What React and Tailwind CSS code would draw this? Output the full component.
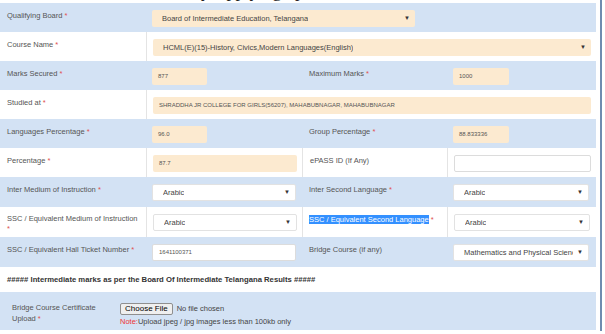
import React from 'react';

const font = { fontFamily: '"Liberation Sans", Arial, sans-serif' };

const Label = ({ children, req }) => (
  <div className="px-[7px] pt-[8px] text-[7.5px] leading-[10px] text-[#555]">
    {children}
    {req && <span className="text-[#e05050]"> *</span>}
  </div>
);

const Field = ({ value, w, white }) => (
  <div
    className={`mt-[7px] ml-[6px] h-[17px] rounded-[2px] px-[6px] flex items-center text-[6px] text-[#555] ${w} ${
      white ? 'bg-white border border-[#dcdcdc]' : 'bg-[#fcead0]'
    }`}
  >
    {value}
  </div>
);

const Select = ({ value, w, white }) => (
  <div
    className={`mt-[7px] ml-[6px] h-[17px] rounded-[2px] pl-[10px] pr-[5px] flex items-center justify-between text-[7.5px] text-[#444] ${w} ${
      white ? 'bg-white border border-[#e2e2e2]' : 'bg-[#fcead0]'
    }`}
  >
    <span className="min-w-0 overflow-hidden whitespace-nowrap">{value}</span>
    <span className="text-[6px] text-[#333] ml-[4px] shrink-0">▼</span>
  </div>
);

const Row = ({ blue, h = 'h-[29px]', children }) => (
  <div
    className={`grid grid-cols-[146px_156px_145px_149px] ${h} ${blue ? 'bg-[#d3e2f4]' : 'bg-white'}`}
  >
    {children}
  </div>
);

const Cell = ({ span, line, children }) => (
  <div className={`${span || ''} ${line ? 'border-l border-[#e4e4e4]' : ''}`}>{children}</div>
);

export default function App() {
  return (
    <div className="w-[605px] h-[334px] bg-white overflow-hidden flex" style={font}>
      <div className="w-[596px] flex flex-col">
        {/* bottom edge of the heading above, cut off */}
        <div className="h-[3px] shrink-0 overflow-hidden">
          <div
            className="mt-[-18px] pl-[168px] text-[18px] leading-[18px] text-[#222] whitespace-nowrap"
            style={{ fontFamily: '"Liberation Serif", serif' }}
          >
            Study Applying up
          </div>
        </div>

        <Row blue>
          <Cell>
            <Label req>Qualifying Board</Label>
          </Cell>
          <Cell span="col-span-3">
            <Select value="Board of Intermediate Education, Telangana" w="w-[263px]" />
          </Cell>
        </Row>

        <Row>
          <Cell>
            <Label req>Course Name</Label>
          </Cell>
          <Cell span="col-span-3" line>
            <Select value="HCML(E)(15)-History, Civics,Modern Languages(English)" w="w-[438px]" />
          </Cell>
        </Row>

        <Row blue>
          <Cell>
            <Label req>Marks Secured</Label>
          </Cell>
          <Cell>
            <Field value="877" w="w-[55px]" />
          </Cell>
          <Cell>
            <Label req>Maximum Marks</Label>
          </Cell>
          <Cell>
            <Field value="1000" w="w-[56px]" />
          </Cell>
        </Row>

        <Row>
          <Cell>
            <Label req>Studied at</Label>
          </Cell>
          <Cell span="col-span-3" line>
            <Field value="SHRADDHA JR COLLEGE FOR GIRLS(56207), MAHABUBNAGAR, MAHABUBNAGAR" w="w-[438px]" />
          </Cell>
        </Row>

        <Row blue>
          <Cell>
            <Label req>Languages Percentage</Label>
          </Cell>
          <Cell>
            <Field value="96.0" w="w-[55px]" />
          </Cell>
          <Cell>
            <Label req>Group Percentage</Label>
          </Cell>
          <Cell>
            <Field value="88.833336" w="w-[56px]" />
          </Cell>
        </Row>

        <Row>
          <Cell>
            <Label req>Percentage</Label>
          </Cell>
          <Cell line>
            <Field value="87.7" w="w-[144px]" />
          </Cell>
          <Cell line>
            <Label>ePASS ID (If Any)</Label>
          </Cell>
          <Cell line>
            <Field value="" w="w-[137px]" white />
          </Cell>
        </Row>

        <Row blue h="h-[30px]">
          <Cell>
            <Label req>Inter Medium of Instruction</Label>
          </Cell>
          <Cell>
            <Select value="Arabic" w="w-[144px]" white />
          </Cell>
          <Cell>
            <Label req>Inter Second Language</Label>
          </Cell>
          <Cell>
            <Select value="Arabic" w="w-[136px]" white />
          </Cell>
        </Row>

        <Row h="h-[30px]">
          <Cell>
            <div className="px-[7px] pt-[7px] text-[7.5px] leading-[10px] text-[#555]">
              SSC / Equivalent Medium of Instruction
              <br />
              <span className="text-[#e05050]">*</span>
            </div>
          </Cell>
          <Cell line>
            <Select value="Arabic" w="w-[144px]" white />
          </Cell>
          <Cell line>
            <div className="px-[6px] pt-[8px] text-[7.5px] leading-[10px] text-[#555] whitespace-nowrap">
              <span className="bg-[#3390ff] text-white">SSC / Equivalent Second Language</span>
              <span className="text-[#e05050]"> *</span>
            </div>
          </Cell>
          <Cell line>
            <Select value="Arabic" w="w-[136px]" white />
          </Cell>
        </Row>

        <Row blue h="h-[30px]">
          <Cell>
            <Label req>SSC / Equivalent Hall Ticket Number</Label>
          </Cell>
          <Cell>
            <Field value="1641100371" w="w-[144px]" white />
          </Cell>
          <Cell>
            <Label>Bridge Course (if any)</Label>
          </Cell>
          <Cell>
            <Select value="Mathematics and Physical Science" w="w-[136px]" white />
          </Cell>
        </Row>

        <div className="h-[25px] bg-white flex items-center px-[7px] text-[7.7px] font-bold text-[#333]">
          ##### Intermediate marks as per the Board Of Intermediate Telangana Results #####
        </div>

        <div className="h-[38px] bg-[#d3e2f4] flex">
          <div className="w-[120px] pl-[12px] pt-[10px] text-[7.5px] leading-[11px] text-[#555]">
            Bridge Course Certificate
            <br />
            Upload <span className="text-[#e05050]">*</span>
          </div>
          <div className="pt-[11px] text-[7.5px] leading-[10px] text-[#444]">
            <div className="flex items-center">
              <span className="h-[12px] px-[4px] flex items-center bg-[#efefef] border border-[#8f8f8f] rounded-[2px] text-[8px] text-black">
                Choose File
              </span>
              <span className="ml-[4px]">No file chosen</span>
            </div>
            <div className="mt-[2px] text-[7.5px]">
              <span className="text-[#e33]">Note:</span>Upload jpeg / jpg images less than 100kb only
            </div>
          </div>
        </div>
      </div>
      <div className="ml-[4px] w-[2px] h-[331px] bg-[#6f8cb0]" />
    </div>
  );
}
